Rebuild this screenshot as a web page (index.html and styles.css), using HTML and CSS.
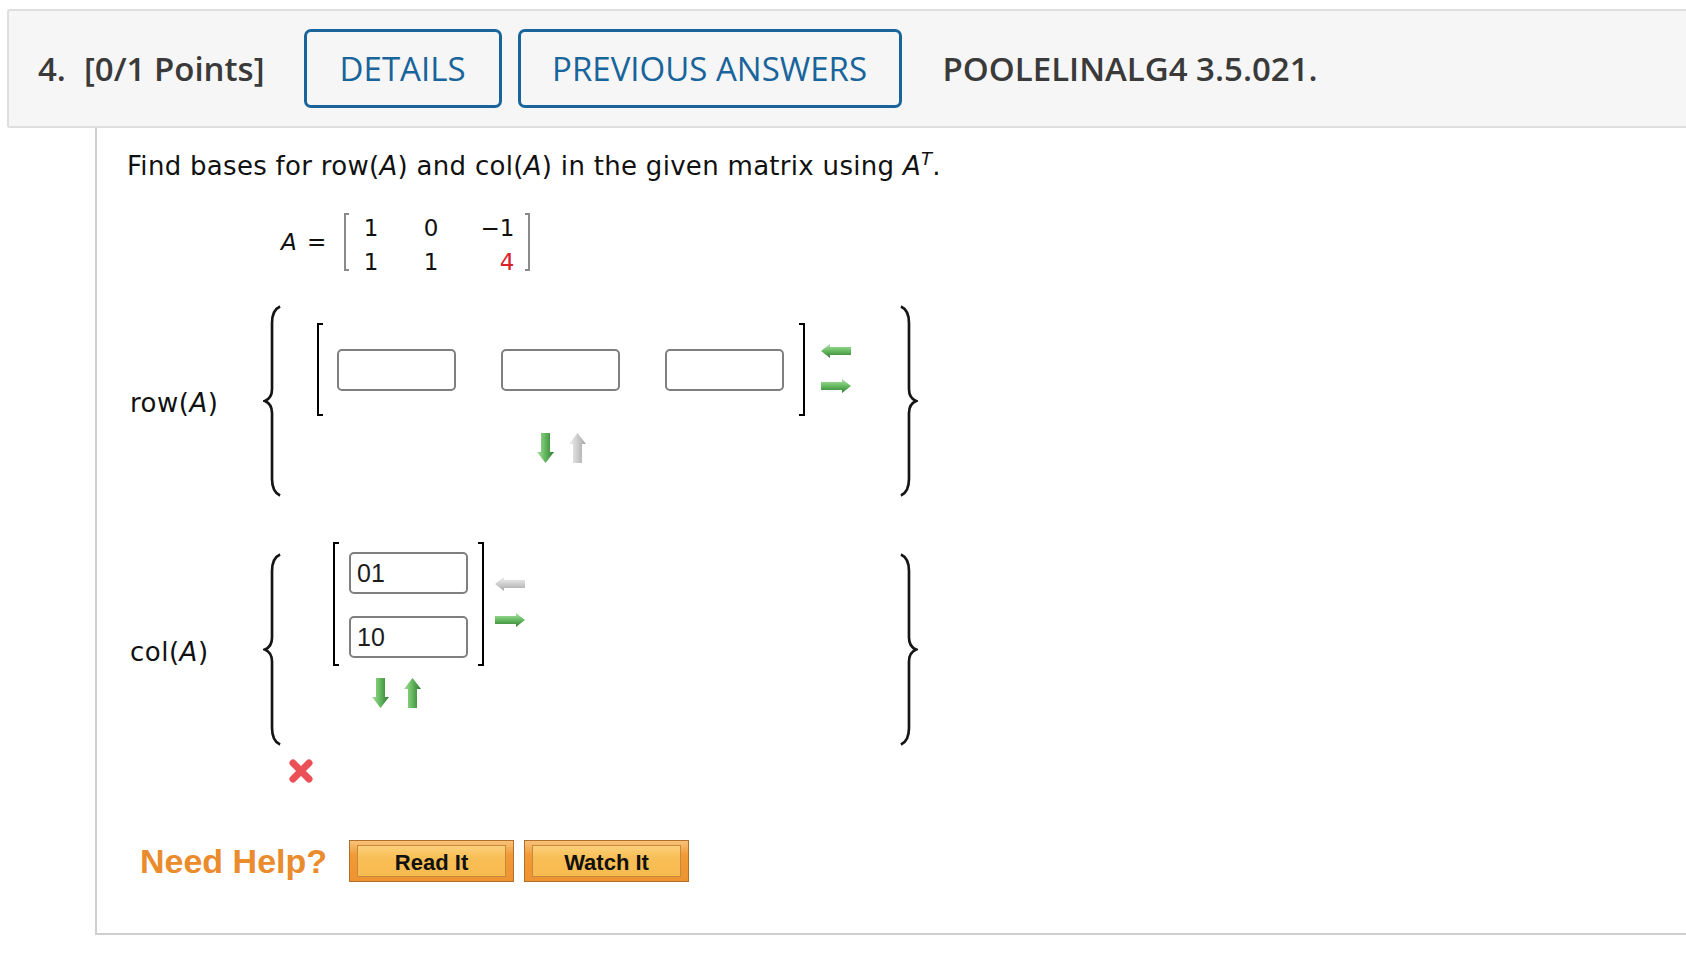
FILE: index.html
```html
<!DOCTYPE html>
<html lang="en">
<head>
<meta charset="utf-8">
<title>Question 4</title>
<link rel="stylesheet" href="styles.css">
</head>
<body>
<div class="header">
  <span class="qnum">4.</span><span class="points">[0/1 Points]</span>
  <button class="hbtn btn-details">DETAILS</button>
  <button class="hbtn btn-prev">PREVIOUS ANSWERS</button>
  <span class="qid">POOLELINALG4 3.5.021.</span>
</div>
<div class="content">
  <p class="question">Find bases for row(<i>A</i>) and col(<i>A</i>) in the given matrix using <i>A</i><sup><i>T</i></sup>.</p>
  <div class="given">
    <span class="var"><i>A</i> =</span>
    <div class="gmatrix">
      <span class="gbr gbr-l"></span>
      <div class="gcells">
        <span>1</span><span>0</span><span>&minus;1</span>
        <span>1</span><span>1</span><span class="red">4</span>
      </div>
      <span class="gbr gbr-r"></span>
    </div>
  </div>

  <div class="section sec-row">
    <div class="label">row(<i>A</i>)</div>
    <svg class="brace" viewBox="0 0 20 192" preserveAspectRatio="none"><path d="M18 1.5 C12 4 9.5 9 9.5 18 L9.5 84 C9.5 91 7 94 2 96 C7 98 9.5 101 9.5 108 L9.5 174 C9.5 183 12 188 18 190.5"/></svg>
    <div class="body body-row">
      <div class="mline">
        <span class="br br-l"></span>
        <div class="cells cells-row">
          <input class="ans" type="text" value="">
          <input class="ans" type="text" value="">
          <input class="ans" type="text" value="">
        </div>
        <span class="br br-r"></span>
        <div class="side side-row">
          <svg class="harrow" viewBox="0 0 30 14"><path class="g-h" d="M0 7 L9 0 L9 3 L30 3 L30 11 L9 11 L9 14 Z"/></svg>
          <svg class="harrow" viewBox="0 0 30 14"><path class="g-h" d="M30 7 L21 0 L21 3 L0 3 L0 11 L21 11 L21 14 Z"/></svg>
        </div>
      </div>
      <div class="varrows varrows-row">
        <svg class="varrow" viewBox="0 0 17 30"><path class="g-v" d="M4 0 L13 0 L13 19 L17 19 L8.5 30 L0 19 L4 19 Z"/></svg>
        <svg class="varrow" viewBox="0 0 17 30"><path class="g-vg" d="M4 30 L13 30 L13 11 L17 11 L8.5 0 L0 11 L4 11 Z"/></svg>
      </div>
    </div>
    <svg class="brace" viewBox="0 0 20 192" preserveAspectRatio="none"><path d="M2 1.5 C8 4 10.5 9 10.5 18 L10.5 84 C10.5 91 13 94 18 96 C13 98 10.5 101 10.5 108 L10.5 174 C10.5 183 8 188 2 190.5"/></svg>
  </div>

  <div class="section sec-col">
    <div class="label">col(<i>A</i>)</div>
    <svg class="brace" viewBox="0 0 20 192" preserveAspectRatio="none"><path d="M18 1.5 C12 4 9.5 9 9.5 18 L9.5 84 C9.5 91 7 94 2 96 C7 98 9.5 101 9.5 108 L9.5 174 C9.5 183 12 188 18 190.5"/></svg>
    <div class="body body-col">
      <div class="mline">
        <span class="br br-l br-tall"></span>
        <div class="cells cells-col">
          <input class="ans" type="text" value="01">
          <input class="ans" type="text" value="10">
        </div>
        <span class="br br-r br-tall"></span>
        <div class="side side-col">
          <svg class="harrow" viewBox="0 0 30 14"><path class="g-hg" d="M0 7 L9 0 L9 3 L30 3 L30 11 L9 11 L9 14 Z"/></svg>
          <svg class="harrow" viewBox="0 0 30 14"><path class="g-h" d="M30 7 L21 0 L21 3 L0 3 L0 11 L21 11 L21 14 Z"/></svg>
        </div>
      </div>
      <div class="varrows varrows-col">
        <svg class="varrow" viewBox="0 0 17 30"><path class="g-v" d="M4 0 L13 0 L13 19 L17 19 L8.5 30 L0 19 L4 19 Z"/></svg>
        <svg class="varrow" viewBox="0 0 17 30"><path class="g-v" d="M4 30 L13 30 L13 11 L17 11 L8.5 0 L0 11 L4 11 Z"/></svg>
      </div>
    </div>
    <svg class="brace" viewBox="0 0 20 192" preserveAspectRatio="none"><path d="M2 1.5 C8 4 10.5 9 10.5 18 L10.5 84 C10.5 91 13 94 18 96 C13 98 10.5 101 10.5 108 L10.5 174 C10.5 183 8 188 2 190.5"/></svg>
  </div>

  <svg class="xmark" viewBox="0 0 28 28"><path d="M6 6 L22 22 M22 6 L6 22"/></svg>

  <div class="help">
    <span class="need">Need Help?</span>
    <button class="hbtn-help"><span>Read It</span></button>
    <button class="hbtn-help"><span>Watch It</span></button>
  </div>
</div>

<svg class="defs" aria-hidden="true">
  <defs>
    <linearGradient id="gradH" x1="0" y1="0" x2="0" y2="1">
      <stop offset="0" stop-color="#b4e2ad"/>
      <stop offset="0.45" stop-color="#6cbf66"/>
      <stop offset="1" stop-color="#2f7d31"/>
    </linearGradient>
    <linearGradient id="gradHg" x1="0" y1="0" x2="0" y2="1">
      <stop offset="0" stop-color="#f0f0f0"/>
      <stop offset="0.45" stop-color="#d2d2d2"/>
      <stop offset="1" stop-color="#a6a6a6"/>
    </linearGradient>
    <linearGradient id="gradV" x1="0" y1="0" x2="1" y2="0">
      <stop offset="0" stop-color="#a9dca2"/>
      <stop offset="0.45" stop-color="#68bb62"/>
      <stop offset="1" stop-color="#2e7a30"/>
    </linearGradient>
    <linearGradient id="gradVg" x1="0" y1="0" x2="1" y2="0">
      <stop offset="0" stop-color="#f0f0f0"/>
      <stop offset="0.45" stop-color="#d0d0d0"/>
      <stop offset="1" stop-color="#a4a4a4"/>
    </linearGradient>
  </defs>
</svg>
</body>
</html>
```

FILE: styles.css
```css
* { box-sizing: border-box; }

body {
  margin: 0;
  background: #ffffff;
  font-family: "DejaVu Sans", Verdana, sans-serif;
  color: #111111;
}

/* ---------- header ---------- */
.header {
  margin: 9px 0 0 7px;
  height: 119px;
  border: 2px solid #dedede;
  border-right: none;
  border-radius: 3px 0 0 3px;
  background: #f6f6f6;
  display: flex;
  align-items: center;
  padding-left: 29px;
  font-family: "Open Sans", sans-serif;
  font-size: 33px;
  color: #3a3a3a;
  white-space: nowrap;
}

.qnum { font-weight: 600; margin-right: 18px; }
.points { font-weight: 600; }

.hbtn {
  height: 79px;
  margin-left: 39px;
  border: 3px solid #18649b;
  border-radius: 7px;
  background: transparent;
  color: #18649b;
  font-family: "Open Sans", sans-serif;
  font-size: 33px;
  font-weight: 400;
  padding: 0;
}
.btn-details { width: 198px; }
.btn-prev { width: 384px; margin-left: 16px; }
.qid { margin-left: 41px; font-weight: 600; }

/* ---------- content ---------- */
.content {
  margin-left: 95px;
  border-left: 2px solid #cfcfcf;
  border-bottom: 2px solid #cfcfcf;
  padding: 23px 0 51px 30px;
}

.question {
  margin: 0;
  font-size: 26px;
  letter-spacing: 0.3px;
  line-height: 30px;
}
.question sup {
  font-size: 18px;
  line-height: 0;
  vertical-align: 10px;
}

.given {
  display: flex;
  align-items: center;
  margin-top: 32px;
  padding-left: 154px;
  font-size: 23px;
  height: 58px;
}
.var { margin-right: 18px; word-spacing: 3px; }
.gmatrix { display: flex; height: 58px; }
.gbr {
  width: 5px;
  height: 58px;
  border: 2px solid #8a8a8a;
}
.gbr-l { border-right: none; }
.gbr-r { border-left: none; }
.gcells {
  display: grid;
  grid-template-columns: 29px 60px 76px;
  grid-auto-rows: 34px;
  line-height: 34px;
  margin-top: -2px;
  padding-right: 11px;
  text-align: right;
}
.red { color: #d8232a; }

/* ---------- sections ---------- */
.section {
  display: grid;
  grid-template-columns: 136px 19px 617px 19px;
  align-items: start;
}
.sec-row { margin-top: 34px; }
.sec-col { margin-top: 56px; }

.label {
  align-self: center;
  padding: 4px 0 0 3px;
  font-size: 26px;
  letter-spacing: 0.5px;
  line-height: 30px;
}

.brace {
  display: block;
  width: 19px;
  height: 192px;
  fill: none;
  stroke: #151515;
  stroke-width: 2.8;
}
.sec-col .brace { height: 193px; }

.body-row { margin: 18px 0 0 35px; }
.body-col { margin: -11px 0 0 51px; }

.mline { display: flex; align-items: flex-start; }

.br {
  width: 6px;
  height: 93px;
  border: 2px solid #000;
}
.br-tall { height: 124px; }
.br-l { border-right: none; }
.br-r { border-left: none; }

.cells { display: flex; }
.cells-row {
  padding: 26px 15px 0 14px;
  gap: 45px;
}
.cells-col {
  flex-direction: column;
  padding: 10px 10px 0 10px;
  gap: 22px;
}

.ans {
  width: 119px;
  height: 42px;
  border: 2px solid #7f7f7f;
  border-radius: 5px;
  background: #fff;
  padding: 0 0 0 6px;
  font-family: "Liberation Sans", Arial, sans-serif;
  font-size: 25px;
  color: #1c1c1c;
}

.side { display: flex; flex-direction: column; }
.side-row { margin-left: 16px; padding-top: 21px; gap: 21px; }
.side-col { margin-left: 11px; padding-top: 35px; gap: 22px; }

.harrow { display: block; width: 30px; height: 14px; }
.varrows { display: flex; gap: 15px; }
.varrows-row { margin: 17px 0 0 220px; }
.varrows-col { margin: 12px 0 0 39px; }
.varrow { display: block; width: 17px; height: 30px; }

.g-h { fill: url(#gradH); }
.g-hg { fill: url(#gradHg); }
.g-v { fill: url(#gradV); }
.g-vg { fill: url(#gradVg); }

.xmark {
  display: block;
  width: 28px;
  height: 28px;
  margin: 11px 0 0 160px;
  fill: none;
  stroke: #ec5057;
  stroke-width: 7;
  stroke-linecap: round;
}

/* ---------- help ---------- */
.help {
  display: flex;
  align-items: center;
  margin-top: 55px;
  padding-left: 13px;
}
.need {
  font-family: "Liberation Sans", Arial, sans-serif;
  font-weight: 700;
  font-size: 34px;
  color: #ea8b2d;
  margin-right: 22px;
}
.hbtn-help {
  width: 165px;
  height: 42px;
  margin-right: 10px;
  padding: 4px 7px;
  border: 1px solid #b0702c;
  background: linear-gradient(#f7c27a, #f19a36 35%, #ee9330);
  font-family: "Liberation Sans", Arial, sans-serif;
}
.hbtn-help span {
  display: flex;
  align-items: center;
  justify-content: center;
  height: 100%;
  padding-top: 3px;
  border: 1px solid #c5893f;
  background: linear-gradient(#fbd07b, #f8be55 40%, #f7bb50);
  font-size: 22px;
  font-weight: 700;
  color: #111;
}

.defs { display: block; width: 0; height: 0; }
```
